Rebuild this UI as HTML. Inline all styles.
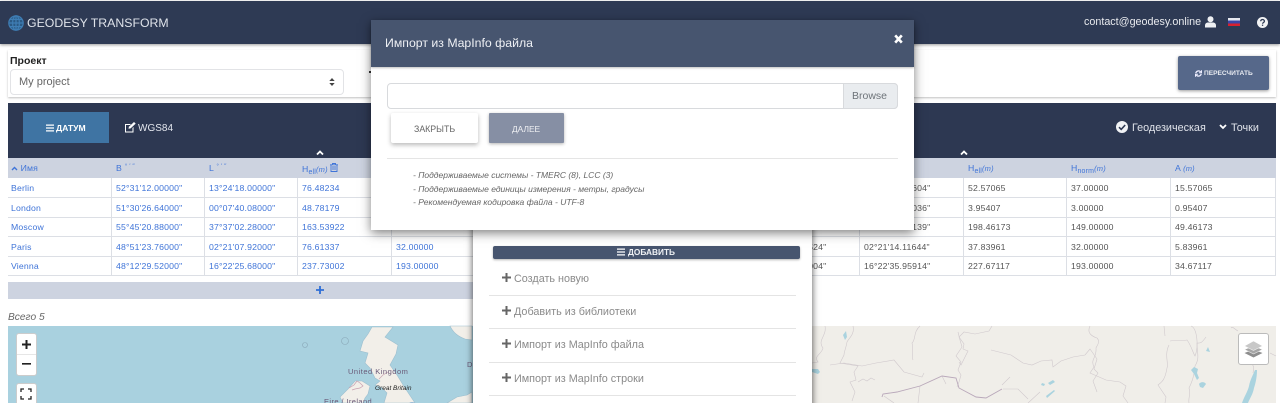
<!DOCTYPE html>
<html lang="ru"><head><meta charset="utf-8"><title>Geodesy Transform</title>
<style>
*{box-sizing:border-box}
html,body{margin:0;padding:0;width:1280px;height:403px;overflow:hidden}
body{background:#fff;font-family:"Liberation Sans","Noto Sans CJK SC",sans-serif;color:#555}
#w{position:relative;width:1280px;height:403px;overflow:hidden;background:#fff}
.a{position:absolute;white-space:nowrap}
table{position:absolute;left:8px;top:158px;width:1268px;border-collapse:separate;border-spacing:0;table-layout:fixed;font-size:8.7px;letter-spacing:.02em}
th{height:20px;background:#cdd3e0;font-weight:400;text-align:left;padding:0 0 0 4px;color:#3f74d8;overflow:hidden;white-space:nowrap}
td{padding:0 0 0 4px;border-right:1px solid #dcdfe5;border-bottom:1px solid #dcdfe5;overflow:hidden;white-space:nowrap;background:#fff;color:#555}
td:first-child{padding-left:3px}
td.b{color:#3f74d8}
th i{font-size:7.5px}
th sub{font-size:7px;vertical-align:-2px;line-height:0}
.item{position:absolute;left:489px;width:307px;border-bottom:1px solid #e4e4e4;height:33px}
.item span{position:absolute;left:25px;top:10px;font-size:10.8px;color:#8a8a8a;white-space:nowrap}
.item svg{position:absolute;left:13px;top:10px}
.note{position:absolute;left:413px;font-size:8.5px;font-style:italic;color:#666;white-space:nowrap}
</style></head><body><div id="w">

<!-- top bar -->
<div class="a" style="left:0;top:1px;width:1280px;height:43px;background:#2e3a54;box-shadow:0 1px 3px rgba(0,0,0,.4)"></div>
<svg class="a" style="left:8px;top:15px" width="16" height="16" viewBox="0 0 16 16" fill="none" stroke="#3f7eb5" stroke-width="1.2"><circle cx="8" cy="8" r="7.2" fill="#2b5a85"/><ellipse cx="8" cy="8" rx="3.4" ry="7.2"/><path d="M8 .8v14.4M.8 8h14.4M1.8 4.4h12.4M1.8 11.6h12.4"/></svg>
<div class="a" style="left:27px;top:15px;font-size:12.3px;line-height:16px;color:#dfe3ea">GEODESY TRANSFORM</div>
<div class="a" style="left:1084px;top:15px;font-size:10.75px;line-height:14px;color:#e8eaee">contact@geodesy.online</div>
<svg class="a" style="left:1205px;top:16px" width="11" height="12" viewBox="0 0 11 12" fill="#eef0f3"><circle cx="5.5" cy="3.2" r="3"/><path d="M0 11.5V9.5C0 7.5 1.5 6.5 3 6.5h5c1.500 0 3 1 3 3v2z"/></svg>
<div class="a" style="left:1228px;top:18px;width:12px;height:8px;background:linear-gradient(#e6e8ef 0 33%,#3b45a8 33% 66%,#d8202e 66%)"></div>
<svg class="a" style="left:1257px;top:17px" width="11" height="11" viewBox="0 0 11 11"><circle cx="5.500" cy="5.500" r="5.500" fill="#f2f3f5"/><path d="M3.700 4.300C3.700 3.200 4.500 2.500 5.500 2.500s1.900.7 1.900 1.700c0 1.300-1.800 1.300-1.800 2.600" fill="none" stroke="#2e3a54" stroke-width="1.300"/><rect x="4.900" y="7.600" width="1.300" height="1.300" fill="#2e3a54"/></svg>

<!-- project card -->
<div class="a" style="left:8px;top:50px;width:1268px;height:47px;background:#fff;box-shadow:0 1px 2px rgba(0,0,0,.25)"></div>
<div class="a" style="left:10px;top:55px;font-size:10.500px;line-height:13px;font-weight:700;color:#222">Проект</div>
<div class="a" style="left:10px;top:69px;width:334px;height:26px;border:1px solid #e2e3e6;border-radius:4px;background:#fff"></div>
<div class="a" style="left:19px;top:76px;font-size:11px;line-height:13px;color:#666">My project</div>
<svg class="a" style="left:329px;top:78px" width="6" height="8" viewBox="0 0 6 8" fill="#444"><path d="M3 0l2.700 3H.3zM3 8L.3 5h5.400z"/></svg>
<div class="a" style="left:1178px;top:56px;width:91px;height:34px;background:#56688a;border-radius:2px;box-shadow:0 1px 3px rgba(0,0,0,.4)"></div>
<svg class="a" style="left:1195px;top:70px" width="7" height="7" viewBox="0 0 7 7" fill="none" stroke="#eef" stroke-width="1.300"><path d="M.8 3.200A2.800 2.800 0 0 1 5.800 2M6.200 3.800A2.800 2.800 0 0 1 1.200 5"/><path d="M6.500.3v2.500H4M.5 6.700V4.200H3" stroke-width="1"/></svg>
<div class="a" style="left:1204px;top:69px;font-size:6.600px;line-height:9px;font-weight:700;color:#e8ebf1">ПЕРЕСЧИТАТЬ</div>

<!-- datum panel -->
<div class="a" style="left:8px;top:103px;width:1268px;height:55px;background:#2d3852"></div>
<div class="a" style="left:23px;top:112px;width:86px;height:31px;background:#3f74a3"></div>
<svg class="a" style="left:46px;top:124px" width="8" height="8" viewBox="0 0 8 8" fill="#fff"><path d="M0 .5h8v1.200H0zM0 3.400h8v1.200H0zM0 6.300h8v1.200H0z"/></svg>
<div class="a" style="left:56px;top:122px;font-size:8.600px;line-height:12px;font-weight:700;color:#fff">ДАТУМ</div>
<svg class="a" style="left:124px;top:122px" width="12" height="11" viewBox="0 0 12 11"><path d="M1 2h6L6 3H2v6.500h6.500V6l1-1v5.500H1z" fill="#fff"/><path d="M4.500 6.800l.4-2L10 0l1.700 1.600-5.100 4.800z" fill="#fff"/></svg>
<div class="a" style="left:138px;top:122px;font-size:10px;line-height:13px;color:#e4e7ee">WGS84</div>
<svg class="a" style="left:1116px;top:121px" width="12" height="12" viewBox="0 0 12 12"><circle cx="6" cy="6" r="6" fill="#f0f2f5"/><path d="M3 6.200l2.200 2.200L9.200 4" fill="none" stroke="#2d3852" stroke-width="1.600"/></svg>
<div class="a" style="left:1132px;top:121px;font-size:10.800px;line-height:14px;color:#dfe2e9">Геодезическая</div>
<svg class="a" style="left:1219px;top:124px" width="8" height="6" viewBox="0 0 8 6"><path d="M1 1l3 3 3-3" fill="none" stroke="#fff" stroke-width="1.800"/></svg>
<div class="a" style="left:1231px;top:121px;font-size:10.800px;line-height:14px;color:#dfe2e9">Точки</div>
<svg class="a" style="left:316px;top:150px" width="8" height="6" viewBox="0 0 8 6"><path d="M1 4.500l3-3 3 3" fill="none" stroke="#fff" stroke-width="1.800"/></svg>
<svg class="a" style="left:960px;top:150px" width="8" height="6" viewBox="0 0 8 6"><path d="M1 4.500l3-3 3 3" fill="none" stroke="#fff" stroke-width="1.800"/></svg>

<!-- table -->
<table>
<colgroup><col style="width:104px"><col style="width:93px"><col style="width:93px"><col style="width:94px"><col style="width:94px"><col style="width:93px"><col style="width:93px"><col style="width:84px"><col style="width:104px"><col style="width:104px"><col style="width:103px"><col style="width:104px"><col style="width:105px"></colgroup>
<tr><th style="padding-left:3px"><svg width="7" height="5" viewBox="0 0 7 5"><path d="M1 4l2.500-2.500L6 4" fill="none" stroke="#3f74d8" stroke-width="1.400"/></svg> Имя</th><th>B <i style="vertical-align:3px;font-size:6px">° ' "</i></th><th>L <i style="vertical-align:3px;font-size:6px">° ' "</i></th><th>H<sub>ell</sub><i>(m)</i> <svg width="8" height="9" viewBox="0 0 8 9" fill="none" stroke="#3f74d8" stroke-width=".9"><path d="M0 1.800h8M2.500 1.800V.5h3v1.300M1 1.800V8.500h6V1.800M3 3v4M5 3v4"/></svg></th><th></th><th></th><th></th><th></th><th></th><th></th><th>H<sub>ell</sub><i>(m)</i></th><th>H<sub>norm</sub><i>(m)</i></th><th>A <i>(m)</i></th></tr>
<tr style="height:20px"><td class="b">Berlin</td><td class="b">52°31'12.00000"</td><td class="b">13°24'18.00000"</td><td class="b">76.48234</td><td class="b">37.00000</td><td></td><td></td><td></td><td>52°31'12.24604"</td><td>13°24'23.12604"</td><td>52.57065</td><td>37.00000</td><td>15.57065</td></tr>
<tr style="height:20px"><td class="b">London</td><td class="b">51°30'26.64000"</td><td class="b">00°07'40.08000"</td><td class="b">48.78179</td><td class="b">3.00000</td><td></td><td></td><td></td><td>51°30'26.84936"</td><td>00°07'45.02036"</td><td>3.95407</td><td>3.00000</td><td>0.95407</td></tr>
<tr style="height:19px"><td class="b">Moscow</td><td class="b">55°45'20.88000"</td><td class="b">37°37'02.28000"</td><td class="b">163.53922</td><td class="b">149.00000</td><td></td><td></td><td></td><td>55°45'21.05139"</td><td>37°37'08.25139"</td><td>198.46173</td><td>149.00000</td><td>49.46173</td></tr>
<tr style="height:20px"><td class="b">Paris</td><td class="b">48°51'23.76000"</td><td class="b">02°21'07.92000"</td><td class="b">76.61337</td><td class="b">32.00000</td><td></td><td></td><td></td><td>48°51'23.91524"</td><td>02°21'14.11644"</td><td>37.83961</td><td>32.00000</td><td>5.83961</td></tr>
<tr style="height:19px"><td class="b">Vienna</td><td class="b">48°12'29.52000"</td><td class="b">16°22'25.68000"</td><td class="b">237.73002</td><td class="b">193.00000</td><td></td><td></td><td></td><td>48°12'29.71004"</td><td>16°22'35.95914"</td><td>227.67117</td><td>193.00000</td><td>34.67117</td></tr>
</table>

<!-- plus bar -->
<div class="a" style="left:8px;top:282px;width:600px;height:17px;background:#cdd3e0"></div>
<svg class="a" style="left:316px;top:286px" width="8" height="8" viewBox="0 0 8 8"><path d="M3.100 0h1.800v3.100H8v1.800H4.900V8H3.100V4.900H0V3.100h3.100z" fill="#2f6fd6"/></svg>
<div class="a" style="left:8px;top:311px;font-size:10.200px;line-height:14px;font-style:italic;color:#666">Всего 5</div>

<!-- map -->
<svg class="a" style="left:0;top:0" width="1280" height="403" viewBox="0 0 1280 403">
<rect x="8" y="326" width="1268" height="77" fill="#f0eee9"/>
<rect x="8" y="326" width="500" height="77" fill="#a9d1df"/>
<g fill="#f2efe9" stroke="#9dbfcf" stroke-width=".6">
<path d="M372 327l21 0-8 10 13 8-2 9-6 11 7 10 8 13 8 12 2 3h-31l3-10-5-5-7-3 5-4-5-3-5-10-5-5 3-10-8-2 3-10 5-7z"/>
<path d="M343 403l-3-6 8-8 7-8 7 0 8 5-2 8-3 4-2 5z"/>
<path d="M450 326c3 6 7 10 15 13l7 1v-14z"/>
<path d="M447 403l10-6 10-2 5-3v11z"/>
</g>
<circle cx="305" cy="345" r="2.500" fill="none" stroke="#8aa8b8" stroke-width=".6"/>
<circle cx="345" cy="341" r="3.500" fill="none" stroke="#8aa8b8" stroke-width=".6"/>
<path d="M349 388l5-3 3-4 3 2 3 3-3 2-5 1-3 1" fill="none" stroke="#c8a0b0" stroke-width=".7"/>
<path d="M388 372l-5 3-4 4" fill="none" stroke="#c8a0b0" stroke-width=".7"/>
<circle cx="412" cy="410" r="7.500" fill="#3f86c4"/>
<text x="348" y="374" font-family="Liberation Sans,sans-serif" font-size="7.500" letter-spacing=".5" fill="#6a5a78">United Kingdom</text>
<text x="375" y="390" font-family="Liberation Sans,sans-serif" font-size="6.500" font-style="italic" fill="#222">Great Britain</text>
<text x="324" y="404" font-family="Liberation Sans,sans-serif" font-size="7.500" letter-spacing=".4" fill="#6a5a78">Eire / Ireland</text>
<text x="467" y="367" font-family="Liberation Sans,sans-serif" font-size="7.500" fill="#6a5a78">D</text>
<g fill="none" stroke="#d0c9cd" stroke-width=".6">
<path d="M825 326c2 10-8 14-2 22-1 6-10 8-5 14l-6 1M853 326c2 8-4 12-6 16-1 6-3 10-3 13l-4 8 18 3-4 6 2 8-6 2 5 10-3 9"/>
<path d="M830 365l14-2 18 3 14-3 18-3 10 12 18 5 2-4"/>
<path d="M920 326c-7 6-4 14-8 17 2 7-1 12 1 17"/>
<path d="M992 326c-3 5-3 5-3 5l-14 3-11-2-5 5 5 7-1 5 5 2-7 14-2-3"/>
<path d="M958 332l2 8 2 7-6 9 5 6-3 8 3 5-2 7-2 5M991 350l20 5 12 8 9 2 9-4 11-1 1 7 8-6 12-4 12-2 5-6 7 10-3 10 4 4-5 8 4 11"/>
<path d="M1090 326c-4 8 4 11 7 12 4 4-1 9-1 10 1 10-6 11-2 19l-4 6 16 7 14 2 6 4-3 10 5 7"/>
<path d="M1170 341c7-1 11 0 17-1 4 5 6 13 8 16 4-10 2-28-4-30M1165 336l-1-10M1169 345c-5 10 0 19-2 23-2 12-5 14-9 17l8 12-1 6"/>
<path d="M1206 337c-5 7-6 6-9 6 0 10 3 15-2 23-1 9-2 14-6 22 2 6-1 10 0 15M1238 331c-4-2-5-5-7-3M1270 353l6 3M1252 364c3 3 1 8 1 9"/>
<path d="M884 396l10 7M920 386l-2 17M942 376l4 8M1003 389l15 0 10 10M1040 392l-12 11M1010 377l-8 8M858 382l5-3 4 2 4-3 4 2"/>
</g>
<path d="M882 397l1-3 14-2 23-6 22-10 14 2 3 10 17 9 10 1 16-9" fill="none" stroke="#b9a8ba" stroke-width=".9"/>
<g fill="#aad3df">
<path d="M1257 370l-2 0c-2 5-5 10-6 16-1 5-5 11-7 17h6c2-5 5-9 6-15 2-6 3-12 3-18zM1199 384c2-3 6-2 7 0l-3 4-3-1zM1048 383l5-3 2 2-5 3zM1042 383l3 1-1 2-3-1zM1046 396l8-6 1 1-8 7z"/>
<path d="M1194 367l-3 3 3 4 3 6 2-2-2-5 1-4zM1206 351l2-4 2 5zM843 335l3-4 1 6-2 3zM818 369l-6 0v3l6 2 2-2z"/>
</g>
</svg>
<div class="a" style="left:16px;top:333px;width:21px;height:43px;background:#fff;border:1px solid #ccc;border-radius:3px"></div>
<div class="a" style="left:17px;top:354px;width:19px;height:1px;background:#e6e6e6"></div>
<svg class="a" style="left:21px;top:339px" width="11" height="32" viewBox="0 0 11 32"><path d="M4.500 1h2v3.500H10v2H6.500V10h-2V6.500H1v-2h3.500zM1 24h9v1.600H1z" fill="#222"/></svg>
<div class="a" style="left:16px;top:383px;width:21px;height:30px;background:#fff;border:1px solid #ccc;border-radius:3px"></div>
<svg class="a" style="left:20px;top:388px" width="12" height="12" viewBox="0 0 12 12"><path d="M1 4V1h3M8 1h3v3M1 8v3h3M8 11h3V8" fill="none" stroke="#222" stroke-width="1.300"/></svg>
<div class="a" style="left:1238px;top:333px;width:31px;height:32px;background:#fff;border:1px solid #bbb;border-radius:3px"></div>
<svg class="a" style="left:1243px;top:340px" width="21" height="18" viewBox="0 0 21 18"><path d="M10.500 9.500L1.500 13l9 4.500 9-4.500z" fill="#8e8e8e"/><path d="M10.500 6L1.500 9.500l9 4.500 9-4.500z" fill="#a6a6a6" stroke="#fff" stroke-width=".5"/><path d="M10.500 1L1.500 6l9 4.500 9-4.500z" fill="#c8c8c8" stroke="#fff" stroke-width=".5"/></svg>

<!-- add menu -->
<div class="a" style="left:473px;top:150px;width:339px;height:260px;background:#fff;box-shadow:0 0 6px 1px rgba(0,0,0,.55)"></div>
<div class="a" style="left:493px;top:246px;width:307px;height:13px;background:#47556f;border-radius:2px;box-shadow:0 1px 2px rgba(0,0,0,.3)"></div>
<svg class="a" style="left:617px;top:248px" width="8" height="8" viewBox="0 0 8 8" fill="#fff"><path d="M0 .5h8v1.200H0zM0 3.400h8v1.200H0zM0 6.300h8v1.200H0z"/></svg>
<div class="a" style="left:628px;top:246px;font-size:8.300px;line-height:13px;font-weight:700;color:#f0f2f5">ДОБАВИТЬ</div>
<div class="item" style="top:263px"><svg width="9" height="9" viewBox="0 0 9 9"><path d="M3.500 0h2v3.500H9v2H5.500V9h-2V5.500H0v-2h3.500z" fill="#666"/></svg><span>Создать новую</span></div>
<div class="item" style="top:296px"><svg width="9" height="9" viewBox="0 0 9 9"><path d="M3.500 0h2v3.500H9v2H5.500V9h-2V5.500H0v-2h3.500z" fill="#666"/></svg><span>Добавить из библиотеки</span></div>
<div class="item" style="top:329px;height:34px"><svg width="9" height="9" viewBox="0 0 9 9"><path d="M3.500 0h2v3.500H9v2H5.500V9h-2V5.500H0v-2h3.500z" fill="#666"/></svg><span>Импорт из MapInfo файла</span></div>
<div class="item" style="top:363px"><svg width="9" height="9" viewBox="0 0 9 9"><path d="M3.500 0h2v3.500H9v2H5.500V9h-2V5.500H0v-2h3.500z" fill="#666"/></svg><span>Импорт из MapInfo строки</span></div>

<!-- dialog -->
<div class="a" style="left:369px;top:71px;width:2px;height:2px;background:#333"></div>
<div class="a" style="left:371px;top:20px;width:543px;height:210px;background:#fff;box-shadow:0 3px 10px rgba(0,0,0,.5)"></div>
<div class="a" style="left:371px;top:20px;width:543px;height:47px;background:#47556f;box-shadow:0 1px 2px rgba(0,0,0,.25)"></div>
<div class="a" style="left:385px;top:35px;font-size:12.3px;line-height:16px;color:#eef0f4">Импорт из MapInfo файла</div>
<svg class="a" style="left:894px;top:34px" width="9" height="10" viewBox="0 0 9 10"><path d="M1.200 1.400l6.600 7.200M7.800 1.400L1.200 8.600" stroke="#fff" stroke-width="2.600" fill="none"/></svg>
<div class="a" style="left:387px;top:83px;width:511px;height:26px;border:1px solid #d8dadd;border-radius:4px;background:#fff"></div>
<div class="a" style="left:843px;top:83px;width:55px;height:26px;background:#e9ecef;border:1px solid #d8dadd;border-radius:0 4px 4px 0"></div>
<div class="a" style="left:852px;top:90px;font-size:10.500px;line-height:13px;color:#6d7379">Browse</div>
<div class="a" style="left:391px;top:113px;width:87px;height:30px;background:#fff;border-radius:2px;box-shadow:0 2px 5px rgba(0,0,0,.28)"></div>
<div class="a" style="left:414px;top:123px;font-size:8.800px;line-height:12px;color:#666">ЗАКРЫТЬ</div>
<div class="a" style="left:489px;top:113px;width:75px;height:30px;background:#868fa4;border-radius:1px;box-shadow:0 1px 3px rgba(0,0,0,.3)"></div>
<div class="a" style="left:512px;top:123px;font-size:8.400px;line-height:12px;color:#f0f1f4">ДАЛЕЕ</div>
<div class="a" style="left:387px;top:158px;width:511px;height:1px;background:#e5e5e5"></div>
<div class="note" style="top:170px">- Поддерживаемые системы - TMERC (8), LCC (3)</div>
<div class="note" style="top:184px">- Поддерживаемые единицы измерения - метры, градусы</div>
<div class="note" style="top:197px">- Рекомендуемая кодировка файла - UTF-8</div>
</div></body></html>
